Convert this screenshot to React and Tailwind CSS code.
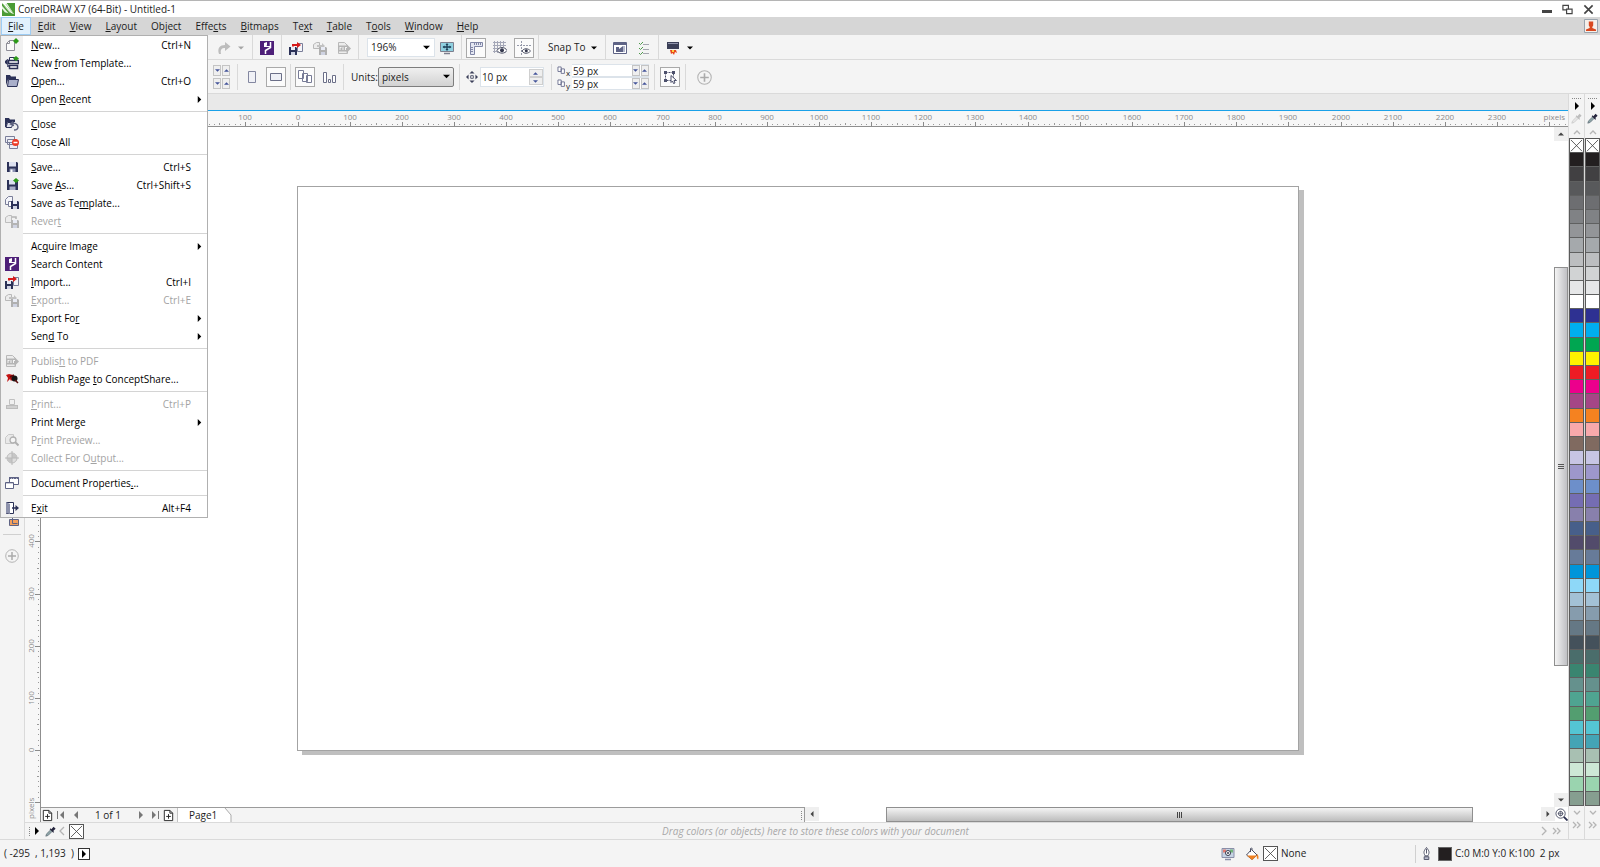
import React from 'react';
import { clsx } from 'clsx';

const MENUS = ['&File', '&Edit', '&View', '&Layout', 'Ob&ject', 'Effe&cts', '&Bitmaps', 'Te&xt', '&Table', 'T&ools', '&Window', '&Help'];

const FILE_MENU = [
  [
    { label: '&New...', keys: 'Ctrl+N', icon: 'new' },
    { label: 'New &from Template...', icon: 'template' },
    { label: '&Open...', keys: 'Ctrl+O', icon: 'open' },
    { label: 'Open &Recent', sub: true },
  ],
  [
    { label: '&Close', icon: 'close' },
    { label: 'C&lose All', icon: 'closeAll' },
  ],
  [
    { label: '&Save...', keys: 'Ctrl+S', icon: 'save' },
    { label: 'Save &As...', keys: 'Ctrl+Shift+S', icon: 'saveAs' },
    { label: 'Save as Te&mplate...', icon: 'saveTemplate' },
    { label: 'Rever&t', icon: 'revert', disabled: true },
  ],
  [
    { label: 'Ac&quire Image', sub: true },
    { label: 'Search Content', icon: 'connect' },
    { label: '&Import...', keys: 'Ctrl+I', icon: 'import' },
    { label: '&Export...', keys: 'Ctrl+E', icon: 'export', disabled: true },
    { label: 'Export Fo&r', sub: true },
    { label: 'Sen&d To', sub: true },
  ],
  [
    { label: 'Publis&h to PDF', icon: 'pdf', disabled: true },
    { label: 'Publish Page &to ConceptShare...', icon: 'share' },
  ],
  [
    { label: '&Print...', keys: 'Ctrl+P', icon: 'print', disabled: true },
    { label: 'Print Merge', sub: true },
    { label: 'P&rint Preview...', icon: 'preview', disabled: true },
    { label: 'Collect For O&utput...', icon: 'collect', disabled: true },
  ],
  [{ label: 'Document Properties&...', icon: 'props' }],
  [{ label: 'E&xit', keys: 'Alt+F4', icon: 'exit' }],
];

const SWATCHES = [
  'bg-[#231f20]', 'bg-[#414042]', 'bg-[#58595b]', 'bg-[#6d6e71]', 'bg-[#808285]', 'bg-[#939598]',
  'bg-[#a5a9ac]', 'bg-[#bcbec0]', 'bg-[#d1d3d4]', 'bg-[#e6e7e8]', 'bg-[#ffffff]', 'bg-[#2e3192]',
  'bg-[#00aeef]', 'bg-[#00a651]', 'bg-[#fff200]', 'bg-[#ed1c24]', 'bg-[#ec008c]', 'bg-[#a54686]',
  'bg-[#f58220]', 'bg-[#f8a9ab]', 'bg-[#806a60]', 'bg-[#c7c5e4]', 'bg-[#9d97cb]', 'bg-[#6d8fca]',
  'bg-[#756db3]', 'bg-[#8880ac]', 'bg-[#475f8a]', 'bg-[#524b6b]', 'bg-[#677b99]', 'bg-[#0095da]',
  'bg-[#8ed8f8]', 'bg-[#a3c1d5]', 'bg-[#869cad]', 'bg-[#657885]', 'bg-[#44515b]', 'bg-[#4a6d6b]',
  'bg-[#3a8570]', 'bg-[#65918d]', 'bg-[#4fa491]', 'bg-[#539e70]', 'bg-[#54c5d3]', 'bg-[#44a4b5]',
  'bg-[#a8c0b2]', 'bg-[#cde8d6]', 'bg-[#9ad4af]', 'bg-[#869e90]',
];

const NAVY = '#2b3157';

const floppy = (x, y, c) => (
  <g>
    <path d={`M${x} ${y}h7l1 1v7h-8z`} fill={c} />
    <path d={`M${x + 2} ${y}h4v3h-4z`} fill="#e8ebf5" />
    <path d={`M${x + 2} ${y + 5}h4v3h-4z`} fill="#cfd3e2" />
  </g>
);

const ICONS = {
  new: (
    <>
      <path d="M1.5 5.5l3-3h5v10h-8z" fill="#fafafa" stroke="#8d8d96" />
      <path d="M4.5 2.5v3h-3" fill="none" stroke="#8d8d96" />
      <path d="M11 0l3 3-3 3-3-3z" fill="#2c9a18" />
    </>
  ),
  template: (
    <>
      <path d="M4.500 1.500h5v3h-5z" fill="#fff" stroke={NAVY} />
      <path d="M3.500 4.500h10v3h-10zM4.500 9.500h8v3h-8z" fill="#fff" stroke={NAVY} strokeWidth="1.500" />
      <path d="M3 3.500L0 6l3 2.500M0 6h3M2 10h2" fill="none" stroke={NAVY} strokeWidth="1.400" />
      <path d="M11 0l3 2.500-3 2.500-3-2.500z" fill="#2c9a18" />
    </>
  ),
  open: (
    <>
      <path d="M1 1h4l1 1.500h5v3H3l-2 6z" fill={NAVY} />
      <path d="M3.500 5.500h10l-1.500 7H2.500z" fill="#a9afca" stroke={NAVY} />
    </>
  ),
  close: (
    <>
      <path d="M0 1h4l1 1.500h5V5H2.500L1 10H0z" fill={NAVY} />
      <path d="M2.500 5.500h6l-2 5H1z" fill="#dfe1ec" stroke={NAVY} />
      <path d="M6 7c3-2 7 0 7 3s-2 3-4 3M8 4.500L5.500 7 9 8.500" fill="none" stroke="#5d627e" strokeWidth="1.400" />
    </>
  ),
  closeAll: (
    <>
      <path d="M.5 1.500h9v6h-9zM2.500 4.500h9v5h-9zM4.500 7.500h8v6h-8z" fill="#eeeff5" stroke="#7a7e99" />
      <circle cx="10.500" cy="7.500" r="3.500" fill="#ee3a24" />
      <path d="M8.500 7.500h4" stroke="#fff" strokeWidth="1.500" />
    </>
  ),
  save: (
    <>
      <path d="M2 2h10l1 1v9H2z" fill={NAVY} />
      <path d="M4 2h7v4.500H4z" fill="#dce0ef" />
      <path d="M4.500 8.500h6V12h-6z" fill="#8d93b3" />
      <path d="M5.500 9.500h2V12h-2z" fill="#fff" />
    </>
  ),
  saveAs: (
    <>
      <path d="M2 2h10l1 1v9H2z" fill={NAVY} />
      <path d="M4 2h6v4.500H4z" fill="#dce0ef" />
      <path d="M4.500 8.500h6V12h-6z" fill="#a8adc6" />
      <path d="M11 0l3 2.500-3 2.500-3-2.500z" fill="#2c9a18" />
    </>
  ),
  saveTemplate: (
    <>
      <path d="M.5 3.500l3-3h4v8h-7z" fill="#f4f5fa" stroke="#7a7e99" />
      <path d="M3.500 5.500h7v5h-7z" fill="#fff" stroke="#7a7e99" />
      {floppy(6, 5, NAVY)}
    </>
  ),
  revert: (
    <>
      <path d="M.5 3.500l3-2h3v7h-6z" fill="#ececec" stroke="#bdbdbd" />
      {floppy(6, 6, '#b4b4b4')}
      <path d="M7 3h4v2" fill="none" stroke="#b4b4b4" strokeWidth="1.500" />
    </>
  ),
  connect: (
    <>
      <path d="M0 0h14v14H0z" fill="#4d1f78" />
      <path d="M10.500 1v5.500L5.500 9.500V13" fill="none" stroke="#fff" strokeWidth="1.500" />
      <path d="M4 2l3-1v3.500L4 6z" fill="#fff" />
      <path d="M4 5.500h6" stroke="#fff" />
    </>
  ),
  import: (
    <>
      <path d="M8.500 2.500h5v8h-5z" fill="#f4f5fa" stroke="#7a7e99" />
      {floppy(0, 6, NAVY)}
      <path d="M3 5.500V3h5V1l4 3-4 3V5H5v.5z" fill="#d61a1a" />
    </>
  ),
  export: (
    <>
      <path d="M.5 3.500l3-2h3v6h-6z" fill="#ececec" stroke="#b9b9b9" />
      <path d="M4 4h5V2l3 3-3 3V6H4z" fill="#c2c2c2" />
      {floppy(6, 6, '#b0b0b0')}
    </>
  ),
  pdf: (
    <>
      <path d="M1.500 1.500h6l3 3v8h-9z" fill="#ececec" stroke="#b9b9b9" />
      <path d="M1 4.500h8.500V3L14 7.500 9.500 12v-1.500H1z" fill="#b5b5b5" />
      <path d="M3 6v3M3 6.500h1.500M6 6v3M8.500 6v3M8.500 6.500H10" stroke="#f4f4f4" />
    </>
  ),
  share: (
    <>
      <path d="M1 3l3-1 4 1v4L6 9l-1-2-3 3 1-4z" fill="#c31212" />
      <circle cx="9.500" cy="6.500" r="3" fill="#141414" />
      <path d="M10 8l3 3M5 5l4-2" stroke="#5a0c0c" strokeWidth="1.500" />
    </>
  ),
  print: (
    <>
      <path d="M4.500 2.500h5v5h-5z" fill="#f0f0f0" stroke="#c0c0c0" />
      <path d="M1 8h12v4H1z" fill="#bcbcbc" />
      <path d="M2 10h10" stroke="#e4e4e4" />
    </>
  ),
  preview: (
    <>
      <path d="M.5 4.500l3-3h5v9h-8z" fill="#e9e9e9" stroke="#c9c9c9" />
      <circle cx="8" cy="7" r="3" fill="#f5f5f5" stroke="#b0b0b0" strokeWidth="1.300" />
      <path d="M10 9l3.500 3.500" stroke="#b0b0b0" strokeWidth="2" />
    </>
  ),
  collect: (
    <>
      <circle cx="7" cy="7" r="5" fill="#dedede" stroke="#bcbcbc" />
      <path d="M7 2a5 5 0 0 1 5 5H7zM7 12a5 5 0 0 1-5-5h5z" fill="#c6c6c6" />
      <path d="M7 0v14M0 7h14" stroke="#b8b8b8" />
    </>
  ),
  props: (
    <>
      <path d="M4.500 1.500h9v7h-9z" fill="#fff" stroke="#5e6385" />
      <path d="M4 2h10" stroke="#5e6385" strokeWidth="2" strokeDasharray="2 .5" />
      <path d="M.5 6.500h8v6h-8z" fill="#fff" stroke="#5e6385" />
      <path d="M1 7.500h7" stroke="#c9cbd8" />
    </>
  ),
  exit: (
    <>
      <path d="M1.500 1.500h7v11h-7z" fill="#fff" stroke={NAVY} />
      <path d="M1 1l4 2v10l-4-1z" fill="#8c91ab" />
      <path d="M7 7h5" stroke={NAVY} strokeWidth="1.500" />
      <path d="M10.500 4L14 7l-3.500 3z" fill={NAVY} />
    </>
  ),
  redo: <path d="M2 13C0 7 3 4 8 4V1l5.500 4.500L8 10V7C5 7 3 8 4 13z" fill="#bdbdbd" />,
  fullscreen: (
    <>
      <path d="M.5 1.500h13v9H.5z" fill="#8fd0e0" stroke="#7d7f8e" />
      <path d="M4 12.500h6" stroke="#7d7f8e" strokeWidth="1.500" />
      <path d="M7 3v6M3.500 6h7" stroke="#1d3f57" strokeWidth="1.300" />
      <path d="M5.500 4L7 2l1.500 2zM5.500 8L7 10l1.500-2zM4.500 4.500L2.500 6l2 1.500zM9.500 4.500l2 1.500-2 1.500z" fill="#1d3f57" />
    </>
  ),
  rulers: (
    <>
      <path d="M1.500 1.500h12v4h-8v8h-4z" fill="#e4e7f2" stroke="#8086a6" />
      <path d="M5.500 2v2M7.500 2v2M9.500 2v2M11.500 2v2M2 6.500h2M2 8.500h2M2 10.500h2" stroke="#8086a6" />
    </>
  ),
  grid: (
    <>
      <path d="M1.500 0v12M4.500 0v12M7.500 0v6M10.500 0v6M0 1.500h13M0 4.500h13M0 7.500h5M0 10.500h5" stroke="#a5a8b8" />
      <path d="M4 9.500c2-4 8-4 10 0-2 3.500-8 3.500-10 0z" fill="#fff" stroke="#4b4f63" />
      <circle cx="9" cy="9.200" r="2" fill="#33374c" />
    </>
  ),
  guides: (
    <>
      <path d="M4.500 0v14M0 4.500h14" stroke="#9599aa" strokeDasharray="2 1" />
      <path d="M5 10c2-3 6-3 8.500 0-2.500 3-6.500 3-8.500 0z" fill="#fff" stroke="#4b4f63" />
      <circle cx="9.300" cy="9.800" r="1.500" fill="#33374c" />
    </>
  ),
  welcome: (
    <>
      <path d="M.5 1.500h13v11H.5z" fill="#fff" stroke="#5e6385" />
      <path d="M1 3h12" stroke="#5e6385" strokeWidth="2" />
      <path d="M3 6h3v2l4-3v6H3z" fill="#5e6385" />
      <path d="M10 5h2v6h-2z" fill="#b5b9cd" />
    </>
  ),
  options: (
    <>
      <path d="M2 2l1.500 1.500L6 1M2 7l1.500 1.500L6 6M2 12l1.500 1.500L6 11" fill="none" stroke="#4f9a4c" />
      <path d="M6 3.500h6M6 8.500h6M6 12.500h6" stroke="#a5a6b0" />
    </>
  ),
  launcher: (
    <>
      <path d="M1 1h12v7H1z" fill="#3b3f57" />
      <path d="M2 2.500h10" stroke="#8f93aa" />
      <path d="M4 9h6l1 3-2-1-1 3-1.500-2L5 13z" fill="#e8481c" />
      <path d="M6 9h2v2H6z" fill="#ffd23c" />
    </>
  ),
  portrait: <path d="M3.500 1.500h7v11h-7z" fill="#f0f1f6" stroke="#8387a0" />,
  landscape: <path d="M1.500 3.500h11v7h-11z" fill="#eef0f6" stroke="#6b6f88" />,
  allPages: <path d="M.5.500h5v8h-5zM4.500 3.500h5v8h-5zM8.500 5.500h5v7h-5z" fill="#fff" stroke="#777b96" />,
  curPage: <path d="M1.500 2.500h3v10h-3zM6.500 9.500h2v3h-2zM10.500 5.500h3v7h-3z" fill="#fff" stroke="#6b6f88" />,
  nudge: (
    <>
      <path d="M7 0l3 3H4zM7 14l3-3H4zM0 7l3-3v6zM14 7l-3-3v6z" fill="#3c405a" />
      <path d="M5.500 5.500h3v3h-3z" fill="#fff" stroke="#3c405a" />
    </>
  ),
  selection: (
    <>
      <path d="M2.500 2.500h8v8h-8z" fill="none" stroke="#4c506c" strokeDasharray="2 1" />
      <path d="M1 1h3v3H1zM9 1h3v3H9zM1 9h3v3H1z" fill="#4c506c" />
      <path d="M8 5.500l5.500 5H11l1 2.500-1.500.5-1-2.500L8 12.500z" fill="#fff" stroke="#4c506c" />
    </>
  ),
  plus: (
    <>
      <circle cx="7" cy="7" r="6.300" fill="none" stroke="#b4b4b4" />
      <path d="M7 3v8M3 7h8" stroke="#ababab" strokeWidth="1.500" />
    </>
  ),
  dropper: (
    <>
      <path d="M1 13l1-3 5-5 2 2-5 5z" fill="#8ea5a8" stroke="#56656e" strokeWidth=".8" />
      <path d="M6 4l1-1 1 1 3-3 2.500 2.500-3 3 1 1-1 1z" fill="#24243c" />
    </>
  ),
  dropperOff: (
    <>
      <path d="M1 13l1-3 5-5 2 2-5 5z" fill="#e6e6e6" stroke="#c2c2c2" strokeWidth=".8" />
      <path d="M6 4l1-1 1 1 3-3 2.500 2.500-3 3 1 1-1 1z" fill="#bdbdbd" />
    </>
  ),
  addPage: (
    <>
      <path d="M2.500 1.500h6l3 3v8h-9z" fill="#fff" stroke="#222" />
      <path d="M8.500 1.500v3h3M7 5.500v5M4.500 8h5" fill="none" stroke="#222" />
    </>
  ),
  zoomPage: (
    <>
      <circle cx="6" cy="6" r="5" fill="#fff" stroke="#4b4f63" />
      <circle cx="6" cy="6" r="2.300" fill="none" stroke="#4b4f63" />
      <path d="M6 3v6M3 6h6" stroke="#4b4f63" strokeWidth=".7" />
      <path d="M9.500 9.500l4 4" stroke="#2d3150" strokeWidth="2" />
    </>
  ),
  proof: (
    <>
      <path d="M1 1.500h12v9H1z" fill="#c6d3e4" stroke="#8a8fa9" />
      <path d="M2 2.500h3v3H2z" fill="#e2786e" />
      <path d="M9 2.500h3v3H9z" fill="#73b37a" />
      <circle cx="7" cy="6" r="2.500" fill="#fff" stroke="#33374c" />
      <circle cx="7" cy="6" r="1" fill="#33374c" />
      <path d="M4 12.500h6" stroke="#8a8fa9" strokeWidth="1.500" />
    </>
  ),
  bucket: (
    <>
      <path d="M1.500 8l5-5.500L12 8l-5 4.500z" fill="#fff" stroke="#4b4f63" />
      <path d="M2 8.500h10L7 13z" fill="#ef8122" />
      <path d="M12 7c1.500 1 2 4 1 5.500-1.500-1-1.500-3.500-1-5.500z" fill="#ef8122" />
      <path d="M5.500 5V1.500c1-1 2 0 2 1" fill="none" stroke="#4b4f63" />
    </>
  ),
  pen: (
    <>
      <path d="M7 .5c-3 4-3.500 5-1.500 9h3C10.500 5.500 10 4.500 7 .5z" fill="#fff" stroke="#4b4f63" />
      <path d="M7 2v5" stroke="#4b4f63" />
      <path d="M4.500 10.500h5v3h-5z" fill="#b9bccd" stroke="#4b4f63" />
    </>
  ),
  user: (
    <>
      <path d="M.5.500h13v13H.5z" fill="#f6efe9" stroke="#9aa3ad" />
      <path d="M4.800 2.500h4.400v4L8.300 8v1L12 10.500V12H2v-1.500L5.700 9V8l-.9-1.500z" fill="#d9481f" />
    </>
  ),
  logo: (
    <>
      <path d="M0 0h14v14H0z" fill="#4b9b35" />
      <path d="M0 0h5l8 12-5-2z" fill="#fff" />
      <path d="M1 1l9 10M4 1l8 10" stroke="#8cc67a" strokeWidth=".8" />
      <path d="M0 3l7 8-4-1-3-4z" fill="#e6f4df" />
    </>
  ),
  offset: <path d="M1.500 1.500h5v7h-5zM6.500 4.500h5v7h-5z" fill="#fff" stroke="#5e6385" strokeWidth="1.300" />,
  effects: (
    <>
      <path d="M1 0h8l-3 4z" fill="#e07a28" />
      <path d="M4.500 5.500h9v6h-9z" fill="#f3a05c" stroke="#5e6385" />
      <path d="M7.500 3.500v6h5" fill="none" stroke="#5e6385" />
    </>
  ),
};

function Icon({ name, className = 'size-[14px]' }) {
  return (
    <svg viewBox="0 0 14 14" className={clsx('shrink-0', className)} aria-hidden="true">
      {ICONS[name]}
    </svg>
  );
}

// Small solid triangle used by drop-downs, flyouts and scroll buttons
function Tri({ dir = 'down', size = 'size-2', fill = 'fill-black' }) {
  const d = {
    down: 'M0 2h8L4 6z',
    up: 'M0 6h8L4 2z',
    right: 'M2 0v8l4-4z',
    left: 'M6 0v8L2 4z',
  }[dir];
  return (
    <svg viewBox="0 0 8 8" className={clsx('shrink-0', size, fill)} aria-hidden="true">
      <path d={d} />
    </svg>
  );
}

function Chevron({ d }) {
  return (
    <svg viewBox="0 0 10 10" className="size-[10px] shrink-0" fill="none" stroke="#b5b5b5" strokeWidth="1.3" aria-hidden="true">
      <path d={d} />
    </svg>
  );
}

// "&" marks the letter that gets underlined
function Mnemonic({ text }) {
  const i = text.indexOf('&');
  if (i < 0) return <span>{text}</span>;
  return (
    <span>
      {text.slice(0, i)}
      <u>{text[i + 1]}</u>
      {text.slice(i + 2)}
    </span>
  );
}

function Divider() {
  return <span className="h-[26px] w-px shrink-0 bg-[#d9d9d9]" />;
}

function IconButton({ name, label, boxed }) {
  return (
    <button
      aria-label={label}
      className={clsx('flex size-5 shrink-0 items-center justify-center', boxed && 'border border-[#a9a9a9] bg-[#fbfbfb]')}
    >
      <Icon name={name} />
    </button>
  );
}

function Spinner() {
  return (
    <span className="flex gap-px">
      <button aria-label="Decrease" className="flex h-[11px] w-2 items-center justify-center border border-[#c4c4c4] bg-[#efefef]">
        <Tri size="size-[5px]" fill="fill-[#44549a]" />
      </button>
      <button aria-label="Increase" className="flex h-[11px] w-2 items-center justify-center border border-[#c4c4c4] bg-[#efefef]">
        <Tri dir="up" size="size-[5px]" fill="fill-[#44549a]" />
      </button>
    </span>
  );
}

function NoColor({ className }) {
  return (
    <svg viewBox="0 0 14 14" className={clsx('border border-[#555] bg-white', className)} preserveAspectRatio="none" aria-hidden="true">
      <path d="M1 1l12 12M13 1L1 13" stroke="#444" strokeWidth=".9" />
    </svg>
  );
}

function TitleBar() {
  return (
    <header className="flex h-[17px] shrink-0 items-center justify-between border-t border-[#b5b5b5] bg-white pr-[6px] pl-[2px]">
      <div className="flex items-center gap-[3px]">
        <Icon name="logo" className="size-[13px]" />
        <h1>CorelDRAW X7 (64-Bit) - Untitled-1</h1>
      </div>
      <div className="flex items-center gap-[10px]">
        <button aria-label="Minimize" className="flex h-3 w-[10px] items-end pb-[2px]">
          <span className="h-[3px] w-full bg-[#444]" />
        </button>
        <button aria-label="Restore">
          <svg viewBox="0 0 12 12" className="size-[11px]" fill="#fff" stroke="#444">
            <path d="M1 1.500h6v5H1z" strokeWidth="1.300" />
            <path d="M5 5.500h6v5H5z" strokeWidth="1.300" />
          </svg>
        </button>
        <button aria-label="Close">
          <svg viewBox="0 0 12 12" className="size-[11px]" stroke="#444" strokeWidth="1.800">
            <path d="M1.500 1.500l9 9M10.500 1.500l-9 9" />
          </svg>
        </button>
      </div>
    </header>
  );
}

function FileMenu() {
  return (
    <div role="menu" className="absolute top-full left-0 z-10 w-[208px] border border-[#b0b0b0] bg-linear-to-r from-[#f1f1f1] from-[22px] to-white to-[22px]">
      {FILE_MENU.map((group, g) => (
        <div key={g}>
          {g > 0 && (
            <div className="flex h-[7px] items-center pl-[22px]">
              <span className="h-px flex-1 bg-[#d4d4d4]" />
            </div>
          )}
          {group.map((item) => (
            <button
              key={item.label}
              role="menuitem"
              disabled={item.disabled}
              className={clsx('flex h-[18px] w-full items-center pr-[4px] pl-[4px] text-left', item.disabled ? 'text-[#a3a3a3]' : 'text-black')}
            >
              <span className="w-[26px] shrink-0">{item.icon && <Icon name={item.icon} />}</span>
              <span className="flex-1 whitespace-nowrap"><Mnemonic text={item.label} /></span>
              {item.keys && <span className="pr-[12px]">{item.keys}</span>}
              {item.sub && <Tri dir="right" size="size-[7px]" />}
            </button>
          ))}
        </div>
      ))}
    </div>
  );
}

function MenuBar() {
  return (
    <nav className="relative flex h-[18px] shrink-0 items-center justify-between bg-[#d6d6d6] pr-[2px] pl-[1px]">
      <div className="flex h-full">
        {MENUS.map((m, i) => (
          <button
            key={m}
            className={clsx('flex h-full items-center border px-[6px]', i === 0 ? 'border-[#9dcdf5] bg-[#e2f1fd]' : 'border-transparent')}
          >
            <Mnemonic text={m} />
          </button>
        ))}
      </div>
      <button aria-label="Account"><Icon name="user" /></button>
      <FileMenu />
    </nav>
  );
}

function StandardBar() {
  return (
    <div className="flex h-[25px] shrink-0 items-center border-b border-[#dadada] bg-[#f4f4f4] pt-px pl-[214px]">
      <div className="flex items-center gap-[4px]">
        <IconButton name="redo" label="Redo" />
        <span className="mr-1"><Tri size="size-[6px]" fill="fill-[#a5a5a5]" /></span>
        <Divider />
        <IconButton name="connect" label="Search content" />
        <Divider />
        <IconButton name="import" label="Import" />
        <IconButton name="export" label="Export" />
        <IconButton name="pdf" label="Publish to PDF" />
        <Divider />
      </div>
      <div className="ml-[8px] flex h-[19px] w-[68px] items-center border border-[#dce3ea] bg-white pr-1">
        <input aria-label="Zoom level" defaultValue="196%" className="w-full min-w-0 pl-[3px] outline-none" />
        <Tri size="size-[7px]" />
      </div>
      <div className="ml-[2px] flex items-center gap-[4px]">
        <IconButton name="fullscreen" label="Full-screen preview" />
        <Divider />
        <IconButton name="rulers" label="Show rulers" boxed />
        <IconButton name="grid" label="Show grid" />
        <IconButton name="guides" label="Show guidelines" boxed />
        <Divider />
      </div>
      <button className="ml-[9px] flex items-center gap-[6px] whitespace-nowrap">
        Snap To
        <Tri size="size-[6px]" />
      </button>
      <div className="ml-[8px] flex items-center gap-[4px]">
        <Divider />
        <IconButton name="welcome" label="Welcome screen" />
        <IconButton name="options" label="Options" />
        <Divider />
        <IconButton name="launcher" label="Application launcher" />
        <Tri size="size-[6px]" />
      </div>
    </div>
  );
}

function PropertyBar() {
  return (
    <div className="flex h-[34px] shrink-0 items-center border-b border-[#dadada] bg-[#f4f4f4] pt-px pl-[213px]">
      <div className="flex flex-col gap-[2px]"><Spinner /><Spinner /></div>
      <div className="ml-[7px] flex items-center gap-[4px]">
        <Divider />
        <IconButton name="portrait" label="Portrait" />
        <IconButton name="landscape" label="Landscape" boxed />
        <Divider />
        <IconButton name="allPages" label="All pages" boxed />
        <IconButton name="curPage" label="Current page" />
        <Divider />
      </div>
      <label htmlFor="units" className="ml-[7px]">Units:</label>
      <div className="relative h-5 w-[76px]">
        <select
          id="units"
          defaultValue="pixels"
          className="size-full appearance-none rounded-[2px] border border-[#7d7d7d] bg-linear-to-b from-[#f0f0f0] to-[#d2d2d2] pl-[3px]"
        >
          <option>pixels</option>
          <option>inches</option>
          <option>millimeters</option>
        </select>
        <span className="pointer-events-none absolute top-[6px] right-[4px]"><Tri size="size-[7px]" /></span>
      </div>
      <div className="ml-[5px] flex items-center gap-[4px]">
        <Divider />
        <Icon name="nudge" className="ml-[2px] size-[12px]" />
      </div>
      <div className="ml-[2px] flex h-5 w-[64px] items-center border border-[#dce3ea] bg-white">
        <input aria-label="Nudge distance" defaultValue="10 px" className="w-full min-w-0 pl-px outline-none" />
        <span className="flex w-[14px] shrink-0 flex-col">
          <button aria-label="More" className="flex h-[8px] items-center justify-center border border-[#cfcfcf] bg-[#efefef]">
            <Tri dir="up" size="size-[5px]" fill="fill-[#44549a]" />
          </button>
          <button aria-label="Less" className="flex h-[8px] items-center justify-center border border-[#cfcfcf] bg-[#efefef]">
            <Tri size="size-[5px]" fill="fill-[#44549a]" />
          </button>
        </span>
      </div>
      <div className="ml-[7px] flex items-center gap-[5px]">
        <Divider />
        <div className="flex flex-col">
          {['x', 'y'].map((axis) => (
            <label key={axis} className="flex h-[13px] items-center">
              <Icon name="offset" className="size-[9px]" />
              <span className="w-[6px] self-end text-[8px] leading-[8px]">{axis}</span>
              <span className="flex h-[13px] w-[77px] items-center border-y border-[#dce3ea] bg-white">
                <input defaultValue="59 px" className="h-[12px] w-full min-w-0 pl-px leading-[12px] outline-none" />
                <Spinner />
              </span>
            </label>
          ))}
        </div>
        <Divider />
        <IconButton name="selection" label="Treat as filled" boxed />
        <Divider />
        <button aria-label="Customize" className="ml-[6px]"><Icon name="plus" className="size-[15px]" /></button>
      </div>
    </div>
  );
}

const UNIT = 52.15;

// One hundred document units between labels, a dot every ten
function HorizontalRuler() {
  const zero = 272.5;
  const marks = [];
  for (let i = -2; i <= 24; i++) marks.push(i);
  return (
    <svg className="h-4 w-full shrink-0 border-b border-[#8f8f8f] bg-[#f7f7f7]" aria-hidden="true">
      {marks.map((i) => {
        const x = Math.round(zero + i * UNIT);
        return (
          <g key={i}>
            <path d={`M${x + 0.5} 11v5`} stroke="#8a8a8a" />
            {[1, 2, 3, 4, 5, 6, 7, 8, 9].map((n) => (
              <path key={n} d={`M${Math.round(x + n * 5.2) + 0.5} ${n === 5 ? 12 : 13}v${n === 5 ? 2 : 1}`} stroke="#9a9a9a" />
            ))}
            {i < 24 && (
              <text x={x} y="9" textAnchor="middle" className="fill-[#8a8a8a] text-[8px]">{Math.abs(i * 100)}</text>
            )}
          </g>
        );
      })}
      <text x="100%" dx="-3" y="9" textAnchor="end" className="fill-[#8a8a8a] text-[8px]">pixels</text>
    </svg>
  );
}

function VerticalRuler() {
  const zero = 623;
  const marks = [];
  for (let i = -1; i <= 11; i++) marks.push(i);
  return (
    <svg className="w-4 shrink-0 self-stretch border-r border-[#8f8f8f] bg-[#f7f7f7]" aria-hidden="true">
      {marks.map((i) => {
        const y = Math.round(zero - i * UNIT);
        return (
          <g key={i}>
            <path d={`M10 ${y + 0.5}h5`} stroke="#8a8a8a" />
            {[1, 2, 3, 4, 5, 6, 7, 8, 9].map((n) => (
              <path key={n} d={`M${n === 5 ? 12 : 13} ${Math.round(y - n * 5.2) + 0.5}h${n === 5 ? 2 : 1}`} stroke="#9a9a9a" />
            ))}
            {i >= 0 && (
              <text transform={`translate(9 ${y}) rotate(-90)`} textAnchor="middle" className="fill-[#8a8a8a] text-[8px]">{i * 100}</text>
            )}
          </g>
        );
      })}
      <text transform="translate(9 692) rotate(-90)" className="fill-[#8a8a8a] text-[8px]">pixels</text>
    </svg>
  );
}

function PageTabs() {
  return (
    <div className="flex min-w-0 flex-1 items-center border-t border-r border-[#9b9b9b] bg-[#f4f4f4]">
      <button aria-label="Add page before"><Icon name="addPage" className="size-[13px]" /></button>
      <button aria-label="First page" className="ml-[3px] flex items-center">
        <span className="h-2 w-px bg-[#777]" />
        <Tri dir="left" fill="fill-[#777]" />
      </button>
      <button aria-label="Previous page" className="ml-[6px]"><Tri dir="left" fill="fill-[#777]" /></button>
      <span className="mx-[15px] w-[25px] whitespace-nowrap">1 of 1</span>
      <button aria-label="Next page" className="ml-[2px]"><Tri dir="right" fill="fill-[#777]" /></button>
      <button aria-label="Last page" className="ml-[5px] flex items-center">
        <Tri dir="right" fill="fill-[#777]" />
        <span className="h-2 w-px bg-[#777]" />
      </button>
      <button aria-label="Add page after" className="ml-[3px]"><Icon name="addPage" className="size-[13px]" /></button>
      <span className="ml-[2px] h-full w-px bg-[#c4c4c4]" />
      <button className="flex h-full items-center bg-white pl-[11px]">Page1</button>
      <svg viewBox="0 0 15 14" className="h-[14px] w-[15px] shrink-0" aria-hidden="true">
        <path d="M0 0h8l6 7v7H0z" fill="#fff" />
        <path d="M8 0l6 7v7" fill="none" stroke="#ababab" />
      </svg>
      <span className="mr-[2px] ml-auto h-[9px] w-px border-l border-dotted border-[#888]" />
    </div>
  );
}

function ScrollButton({ dir, label }) {
  return (
    <button aria-label={label} className="flex size-[14px] shrink-0 items-center justify-center bg-[#efefef]">
      <Tri dir={dir} size="size-[6px]" fill="fill-[#444]" />
    </button>
  );
}

function VerticalScroll() {
  return (
    <div className="flex w-[14px] shrink-0 flex-col">
      <ScrollButton dir="up" label="Scroll up" />
      <div className="flex flex-1 flex-col">
        <span className="flex-[127]" />
        <div className="flex flex-[398] items-center justify-center border border-[#8f8f8f] bg-linear-to-r from-[#f4f4f4] to-[#c0c0c4]">
          <span className="flex flex-col gap-px">
            <i className="h-px w-[6px] bg-[#555]" />
            <i className="h-px w-[6px] bg-[#555]" />
            <i className="h-px w-[6px] bg-[#555]" />
          </span>
        </div>
        <span className="flex-[128]" />
      </div>
      <ScrollButton dir="down" label="Scroll down" />
    </div>
  );
}

function HorizontalScroll() {
  return (
    <div className="flex w-1/2 shrink-0 bg-white">
      <ScrollButton dir="left" label="Scroll left" />
      <div className="flex flex-1">
        <span className="flex-[67]" />
        <div className="flex flex-[585] items-center justify-center gap-px border border-[#8f8f8f] bg-linear-to-b from-[#f4f4f4] to-[#bdbdbd]">
          <i className="h-[6px] w-px bg-[#444]" />
          <i className="h-[6px] w-px bg-[#444]" />
          <i className="h-[6px] w-px bg-[#444]" />
        </div>
        <span className="flex-[68]" />
      </div>
      <ScrollButton dir="right" label="Scroll right" />
      <button aria-label="Navigator"><Icon name="zoomPage" className="size-[13px]" /></button>
    </div>
  );
}

function DocumentPalette() {
  return (
    <div className="flex h-[17px] shrink-0 items-center border-t border-[#dadada] bg-[#f4f4f4] pr-[6px] pl-[4px]">
      <span className="h-[9px] w-px border-l border-dotted border-[#888]" />
      <button aria-label="Palette menu" className="ml-[3px]"><Tri dir="right" /></button>
      <button aria-label="Eyedropper" className="ml-[4px]"><Icon name="dropper" className="size-[11px]" /></button>
      <span className="ml-px"><Chevron d="M7 1L3 5l4 4" /></span>
      <NoColor className="ml-[2px] size-[15px]" />
      <p className="flex-1 pl-2 text-center text-[#a8a8a8] italic">
        Drag colors (or objects) here to store these colors with your document
      </p>
      <Chevron d="M3 1l4 4-4 4" />
      <span className="ml-[3px]"><Chevron d="M1 2l3 3-3 3M5 2l3 3-3 3" /></span>
    </div>
  );
}

function Palette({ active }) {
  return (
    <aside className="flex w-4 shrink-0 flex-col border-l border-[#dadada] bg-[#f4f4f4]">
      <div className="flex h-[44px] flex-col items-center pt-[4px]">
        <span className="h-px w-[9px] border-t border-dotted border-[#888]" />
        <span className="mt-[3px]"><Tri dir="right" /></span>
        <span className="mt-[3px]"><Icon name={active ? 'dropper' : 'dropperOff'} className="size-[11px]" /></span>
        <span className="mt-[3px]"><Chevron d="M2 7l3-3 3 3" /></span>
      </div>
      <div className="flex flex-1 flex-col border-x border-[#5b5b5b]">
        <NoColor className="min-h-0 w-full flex-1 border-x-0" />
        {SWATCHES.map((c) => (
          <button key={c} aria-label="Color swatch" className={clsx('flex-1 border-b border-[#5f6060]', c)} />
        ))}
      </div>
      <div className="flex h-[33px] flex-col items-center gap-[2px] pt-[2px]">
        <Chevron d="M2 3l3 3 3-3" />
        <Chevron d="M1 2l3 3-3 3M5 2l3 3-3 3" />
      </div>
    </aside>
  );
}

function StatusBar() {
  return (
    <footer className="flex h-[28px] shrink-0 items-center border-t border-[#dadada] bg-[#f4f4f4] pl-[4px]">
      <span className="w-[74px] whitespace-pre">( -295  , 1,193  )</span>
      <button aria-label="Cursor options" className="flex size-[12px] items-center justify-center border border-[#333] bg-white">
        <Tri dir="right" />
      </button>
      <div className="ml-auto flex w-[379px] items-center">
        <Icon name="proof" />
        <Icon name="bucket" className="ml-[10px] size-[14px]" />
        <NoColor className="ml-[4px] size-[15px]" />
        <span className="ml-[3px]">None</span>
        <span className="ml-auto h-[18px] w-px bg-[#d0d0d0]" />
        <div className="flex w-[184px] items-center whitespace-pre">
          <Icon name="pen" className="ml-[4px] size-[13px]" />
          <span className="ml-[5px] size-[14px] border border-[#666] bg-[#231f20]" />
          <span className="ml-[3px]">C:0 M:0 Y:0 K:100  2 px</span>
        </div>
      </div>
    </footer>
  );
}

export default function App() {
  return (
    <div className="flex h-screen min-w-[1000px] flex-col overflow-hidden bg-[#f4f4f4] font-['Open_Sans','Noto_Sans',sans-serif] text-[10px] text-[#1c1c1c]">
      <TitleBar />
      <MenuBar />
      <StandardBar />
      <PropertyBar />

      <main className="flex min-h-0 flex-1">
        {/* Toolbox */}
        <div className="flex w-[25px] shrink-0 flex-col items-center border-r border-[#dadada] pt-[420px]">
          <Icon name="effects" />
          <span className="mt-[6px] h-px w-[18px] bg-[#d0d0d0]" />
          <button aria-label="Customize toolbox" className="mt-[14px]"><Icon name="plus" className="size-[14px]" /></button>
        </div>

        <div className="flex min-w-0 flex-1 flex-col">
          <div className="h-[17px] shrink-0 border-b border-[#1ba1e8] bg-[#e9e9e9]" />
          <HorizontalRuler />
          <div className="flex min-h-0 flex-1">
            <VerticalRuler />
            <div className="flex min-w-0 flex-1 flex-col">
              <div className="flex min-h-0 flex-1 bg-white">
                <div className="relative min-w-0 flex-1 overflow-hidden">
                  <div className="absolute top-[59px] left-[256px] h-[565px] w-[1002px] border border-[#a3a3a3] bg-white shadow-[5px_4px_0_#bfbfbf]" />
                </div>
                <VerticalScroll />
              </div>
              <div className="flex h-[15px] shrink-0">
                <PageTabs />
                <HorizontalScroll />
              </div>
            </div>
          </div>
          <DocumentPalette />
        </div>

        <Palette />
        <Palette active />
      </main>

      <StatusBar />
    </div>
  );
}
